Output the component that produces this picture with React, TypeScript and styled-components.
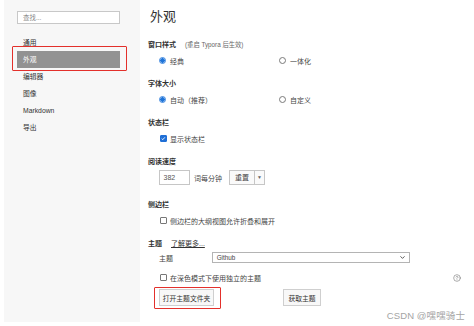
import React from 'react';
import styled, { createGlobalStyle } from 'styled-components';
import { ChevronDown, CircleHelp } from 'lucide-react';

const Global = createGlobalStyle`
  html, body { margin: 0; padding: 0; background: #fff; }
  body {
    font-family: "Liberation Sans", "Noto Sans CJK SC", sans-serif;
    color: #333;
  }
`;

const Frame = styled.div`
  position: relative;
  display: flex;
  width: 474px;
  height: 326px;
  box-sizing: border-box;
  padding: 0 0 4px 4px;
  overflow: hidden;
`;

const Sidebar = styled.aside`
  width: 136px;
  flex-shrink: 0;
  background: #f7f7f7;
  box-sizing: border-box;
  padding: 11px 0 0 13px;
`;

const Search = styled.input`
  display: block;
  width: 103px;
  height: 12.5px;
  box-sizing: border-box;
  border: 1px solid #c8c8c8;
  background: #fff;
  padding: 0 0 0 5px;
  font: 6.5px "Liberation Sans", "Noto Sans CJK SC", sans-serif;
  color: #333;
  outline: none;
  &::placeholder { color: #888; }
`;

const Nav = styled.ul`
  list-style: none;
  margin: 10.5px 0 0;
  padding: 0;
  width: 103px;
`;

const NavItem = styled.li<{ $active?: boolean }>`
  position: relative;
  height: 17px;
  line-height: 17px;
  padding-left: 6px;
  font-size: 6.8px;
  color: ${(p) => (p.$active ? '#fff' : '#333')};
  background: ${(p) => (p.$active ? '#929292' : 'transparent')};
`;

type Inset = { $t: number; $r: number; $b: number; $l: number };
const Mark = styled.span<Inset>`
  position: absolute;
  top: -${(p) => p.$t}px;
  right: -${(p) => p.$r}px;
  bottom: -${(p) => p.$b}px;
  left: -${(p) => p.$l}px;
  border: 1.5px solid #e3302b;
  border-radius: 1px;
  pointer-events: none;
`;

const Main = styled.main`
  flex: 1;
  background: #fff;
  box-sizing: border-box;
  padding: 7px 13px 0 8px;
`;

const Heading = styled.h1`
  margin: 0 0 0 2px;
  height: 20px;
  line-height: 20px;
  font-size: 13px;
  font-weight: normal;
  color: #333;
`;

const Section = styled.section<{ $gap: number }>`
  margin-top: ${(p) => p.$gap}px;
`;

const Label = styled.div`
  height: 12px;
  line-height: 12px;
  font-size: 7px;
  font-weight: 700;
  color: #333;
  display: flex;
  align-items: center;
  gap: 9px;
`;

const Hint = styled.span`
  font-size: 6.3px;
  font-weight: normal;
  color: #666;
`;

const Link = styled.a`
  font-weight: normal;
  color: #333;
  text-decoration: underline;
`;

const Row = styled.div<{ $top?: number; $h?: number; $indent?: number }>`
  display: flex;
  align-items: center;
  height: ${(p) => p.$h ?? 15}px;
  margin-top: ${(p) => p.$top ?? 2}px;
  padding-left: ${(p) => p.$indent ?? 11}px;
  font-size: 7px;
  color: #444;
`;

const Option = styled.label`
  display: flex;
  align-items: center;
  gap: 4px;
  width: 120px;
`;

const Radio = styled.span<{ $on?: boolean }>`
  width: 7px;
  height: 7px;
  box-sizing: border-box;
  border-radius: 50%;
  border: 1px solid ${(p) => (p.$on ? '#3b86e0' : '#7a7a7a')};
  background: ${(p) => (p.$on ? 'radial-gradient(circle, #1f74d8 0 2px, #cfe2f8 2.4px)' : '#fff')};
  flex-shrink: 0;
`;

const Box = styled.span<{ $on?: boolean }>`
  display: inline-flex;
  align-items: center;
  justify-content: center;
  width: 6.5px;
  height: 6.5px;
  box-sizing: border-box;
  border-radius: 1px;
  border: 1px solid ${(p) => (p.$on ? '#1f6fd6' : '#777')};
  background: ${(p) => (p.$on ? '#1f6fd6' : '#fff')};
  margin-right: 3.5px;
  flex-shrink: 0;
`;

const NumberInput = styled.div`
  width: 31px;
  height: 15px;
  box-sizing: border-box;
  border: 1px solid #c6c6c6;
  background: #fff;
  padding-left: 3.5px;
  line-height: 13px;
  font-size: 7px;
  color: #555;
`;

const Unit = styled.span`
  margin: 0 7px 0 4px;
`;

const Split = styled.div`
  display: flex;
  height: 15px;
  box-sizing: border-box;
  border: 1px solid #c6c6c6;
  background: #fafafa;
`;

const SplitMain = styled.span`
  width: 24px;
  line-height: 13px;
  text-align: center;
  border-right: 1px solid #c6c6c6;
`;

const SplitCaret = styled.span`
  width: 9px;
  line-height: 13px;
  text-align: center;
  font-size: 5px;
  color: #666;
`;

const FieldName = styled.span`
  width: 52.7px;
`;

const Select = styled.div`
  display: flex;
  align-items: center;
  justify-content: space-between;
  width: 198px;
  height: 11px;
  box-sizing: border-box;
  border: 1px solid #b4b4b4;
  background: #fff;
  padding: 0 3px 0 4px;
  font-size: 6.3px;
  color: #444;
`;

const Spread = styled(Row)`
  justify-content: space-between;
`;

const Check = styled.span`
  display: flex;
  align-items: center;
`;

const Button = styled.button<{ $w: number; $gap?: number }>`
  position: relative;
  width: ${(p) => p.$w}px;
  height: 17px;
  margin-left: ${(p) => p.$gap ?? 0}px;
  padding: 0;
  box-sizing: border-box;
  border: 1px solid #cfcfcf;
  background: #f8f8f8;
  font: 6.8px "Liberation Sans", "Noto Sans CJK SC", sans-serif;
  color: #333;
`;

const Watermark = styled.div`
  position: absolute;
  right: 9px;
  bottom: 4px;
  font-size: 9.5px;
  color: #a4a4a4;
  letter-spacing: 0.1px;
`;

const Tick = () => (
  <svg width="5" height="5" viewBox="0 0 10 10">
    <path d="M1.5 5.2 L4 7.6 L8.6 2.4" fill="none" stroke="#fff" strokeWidth="2" />
  </svg>
);

const navItems = ['通用', '外观', '编辑器', '图像', 'Markdown', '导出'];

const App = () => {
  return (
    <>
      <Global />
      <Frame>
        <Sidebar>
          <Search placeholder="查找..." />
          <Nav>
            {navItems.map((n) => (
              <NavItem key={n} $active={n === '外观'}>
                {n}
                {n === '外观' && <Mark $t={5} $r={7} $b={3} $l={5} />}
              </NavItem>
            ))}
          </Nav>
        </Sidebar>

        <Main>
          <Heading>外观</Heading>

          <Section $gap={12}>
            <Label>
              窗口样式 <Hint>(重启 Typora 后生效)</Hint>
            </Label>
            <Row>
              <Option><Radio $on />经典</Option>
              <Option><Radio />一体化</Option>
            </Row>
          </Section>

          <Section $gap={10}>
            <Label>字体大小</Label>
            <Row>
              <Option><Radio $on />自动（推荐）</Option>
              <Option><Radio />自定义</Option>
            </Row>
          </Section>

          <Section $gap={10}>
            <Label>状态栏</Label>
            <Row $indent={12}>
              <Box $on><Tick /></Box>显示状态栏
            </Row>
          </Section>

          <Section $gap={10}>
            <Label>阅读速度</Label>
            <Row>
              <NumberInput>382</NumberInput>
              <Unit>词每分钟</Unit>
              <Split>
                <SplitMain>重置</SplitMain>
                <SplitCaret>▼</SplitCaret>
              </Split>
            </Row>
          </Section>

          <Section $gap={14}>
            <Label>侧边栏</Label>
            <Row $indent={12}>
              <Box />侧边栏的大纲视图允许折叠和展开
            </Row>
          </Section>

          <Section $gap={10}>
            <Label>
              主题 <Link>了解更多...</Link>
            </Label>
            <Row $top={0}>
              <FieldName>主题</FieldName>
              <Select>
                Github
                <ChevronDown size={7} strokeWidth={3} color="#444" />
              </Select>
            </Row>
            <Spread $top={5} $indent={12}>
              <Check><Box />在深色模式下使用独立的主题</Check>
              <CircleHelp size={8} strokeWidth={1.6} color="#666" />
            </Spread>
            <Row $top={4} $h={17}>
              <Button $w={55}>
                打开主题文件夹
                <Mark $t={3} $r={8} $b={4} $l={6} />
              </Button>
              <Button $w={38} $gap={69}>获取主题</Button>
            </Row>
          </Section>
        </Main>
        <Watermark>CSDN @嘿嘿骑士</Watermark>
      </Frame>
    </>
  );
};

export default App;
